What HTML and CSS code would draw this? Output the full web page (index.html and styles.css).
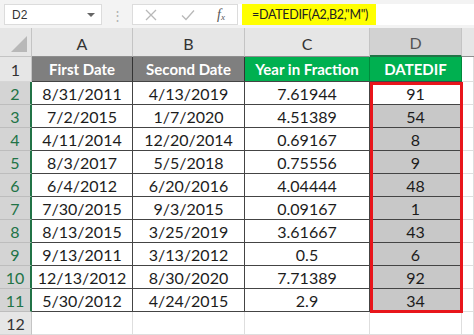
FILE: index.html
```html
<!DOCTYPE html>
<html>
<head>
<meta charset="utf-8">
<link rel="stylesheet" href="styles.css">
</head>
<body>
<div class="app">
  <div class="fbar">
    <div class="namebox"><span>D2</span><span class="caret"></span></div>
    <div class="dots">⋮</div>
    <div class="btns">
      <svg class="ico" width="14" height="14" viewBox="0 0 14 14"><path d="M2 2L12 12M12 2L2 12" stroke="#b8b8b8" stroke-width="1.3" fill="none"/></svg>
      <svg class="ico" width="16" height="14" viewBox="0 0 16 14"><path d="M2 7.5L6 11.5L14 2.5" stroke="#b8b8b8" stroke-width="1.3" fill="none"/></svg>
      <span class="fx">f<sub>x</sub></span>
    </div>
    <div class="formula"><span class="hl">=DATEDIF(A2,B2,"M")</span></div>
  </div>
  <div class="grid">
    <div class="ch corner"><span class="tri"></span></div>
    <div class="ch">A</div>
    <div class="ch">B</div>
    <div class="ch">C</div>
    <div class="ch sel">D</div>
    <div class="ch last"></div>

    <div class="rh r1">1</div>
    <div class="c hd gray">First Date</div>
    <div class="c hd gray">Second Date</div>
    <div class="c hd green">Year in Fraction</div>
    <div class="c hd green">DATEDIF</div>
    <div class="c e"></div>

    <div class="rh s">2</div><div class="c">8/31/2011</div><div class="c">4/13/2019</div><div class="c">7.61944</div><div class="c d first">91</div><div class="c e"></div>
    <div class="rh s">3</div><div class="c">7/2/2015</div><div class="c">1/7/2020</div><div class="c">4.51389</div><div class="c d">54</div><div class="c e"></div>
    <div class="rh s">4</div><div class="c">4/11/2014</div><div class="c">12/20/2014</div><div class="c">0.69167</div><div class="c d">8</div><div class="c e"></div>
    <div class="rh s">5</div><div class="c">8/3/2017</div><div class="c">5/5/2018</div><div class="c">0.75556</div><div class="c d">9</div><div class="c e"></div>
    <div class="rh s">6</div><div class="c">6/4/2012</div><div class="c">6/20/2016</div><div class="c">4.04444</div><div class="c d">48</div><div class="c e"></div>
    <div class="rh s">7</div><div class="c">7/30/2015</div><div class="c">9/3/2015</div><div class="c">0.09167</div><div class="c d">1</div><div class="c e"></div>
    <div class="rh s">8</div><div class="c">8/13/2015</div><div class="c">3/25/2019</div><div class="c">3.61667</div><div class="c d">43</div><div class="c e"></div>
    <div class="rh s">9</div><div class="c">9/13/2011</div><div class="c">3/13/2012</div><div class="c">0.5</div><div class="c d">6</div><div class="c e"></div>
    <div class="rh s">10</div><div class="c">12/13/2012</div><div class="c">8/30/2020</div><div class="c">7.71389</div><div class="c d">92</div><div class="c e"></div>
    <div class="rh s">11</div><div class="c">5/30/2012</div><div class="c">4/24/2015</div><div class="c">2.9</div><div class="c d last">34</div><div class="c e"></div>

    <div class="rh">12</div><div class="c e"></div><div class="c e"></div><div class="c e"></div><div class="c e"></div><div class="c e"></div>
    <div class="selbox"></div>
  </div>
</div>
</body>
</html>
```
FILE: styles.css
```css
* { box-sizing: border-box; }
html, body { margin: 0; padding: 0; background: #fff; }
body { width: 474px; height: 335px; overflow: hidden; font-family: Lato, "Open Sans", sans-serif; color: #222; }
.app { width: 474px; }
.fbar { height: 28px; background: #f3f3f3; display: flex; align-items: center; padding: 4px 0 3px 4px; gap: 0; }
.namebox { width: 98px; height: 21px; background: #fff; border: 1px solid #dcdcdc; display: flex; align-items: center; justify-content: space-between; padding: 0 6px 0 7px; font-family: "Liberation Sans", sans-serif; font-size: 12px; color: #333; }
.caret { width: 0; height: 0; border-left: 4px solid transparent; border-right: 4px solid transparent; border-top: 4px solid #666; }
.dots { width: 30px; text-align: center; color: #b0b0b0; font-size: 13px; }
.btns { width: 106px; height: 21px; background: #fff; border: 1px solid #dcdcdc; display: flex; align-items: center; justify-content: space-between; padding: 0 12px 0 11px; }
.fx { font-family: "Liberation Serif", serif; font-style: italic; color: #555; font-size: 14px; }
.fx sub { font-size: 9px; vertical-align: -1px; }
.formula { flex: 1; height: 21px; background: #fff; padding-left: 4px; display: flex; align-items: stretch; }
.hl { background: #ffff00; font-size: 12.5px; letter-spacing: -0.3px; display: flex; align-items: center; padding: 0 8px 0 10px; color: #222; font-family: Lato, sans-serif; }
.grid { position: relative; display: grid; grid-template-columns: 32px 101px 112px 125px 92px 12px; grid-template-rows: 29px 25px repeat(10, 23px) 23px; }
.ch { background: #e6e6e6; border-right: 1px solid #c4c4c4; border-bottom: 1px solid #8e8e8e; display: flex; align-items: center; justify-content: center; font-size: 16px; color: #333; padding-top: 2px; }
.ch.corner { position: relative; border-bottom-color: #c4c4c4; }
.tri { position: absolute; right: 4px; bottom: 4px; width: 0; height: 0; border-left: 16px solid transparent; border-bottom: 16px solid #b8b8b8; }
.ch.sel { background: #d2d2d2; color: #555; border-bottom: 2px solid #217346; }
.ch.last { border-right: none; }
.rh { background: #e6e6e6; border-right: 1px solid #c4c4c4; border-bottom: 1px solid #d6d6d6; display: flex; align-items: center; justify-content: center; font-size: 16px; color: #333; }
.rh.s { background: #d4d4d4; color: #217346; border-right: 2px solid #217346; border-bottom-color: #bdbdbd; }
.c { display: flex; align-items: center; justify-content: center; font-size: 16px; color: #1c1c1c; border-right: 1px solid #444; border-bottom: 1px solid #444; }
.c.hd { font-weight: bold; color: #fff; font-size: 15px; }
.gray { background: #7f7f7f; border-right-color: #333; }
.green { background: #00b050; border-right-color: #008a3c; }
.c.d { background: #c8c8c8; }
.c.d.first { background: #fff; }
.c.e { border-right: 1px solid #dedede; border-bottom: 1px solid #dedede; }
.selbox { position: absolute; left: 370px; top: 54px; width: 93px; height: 231px; border: 3px solid #e8151b; pointer-events: none; }
```
